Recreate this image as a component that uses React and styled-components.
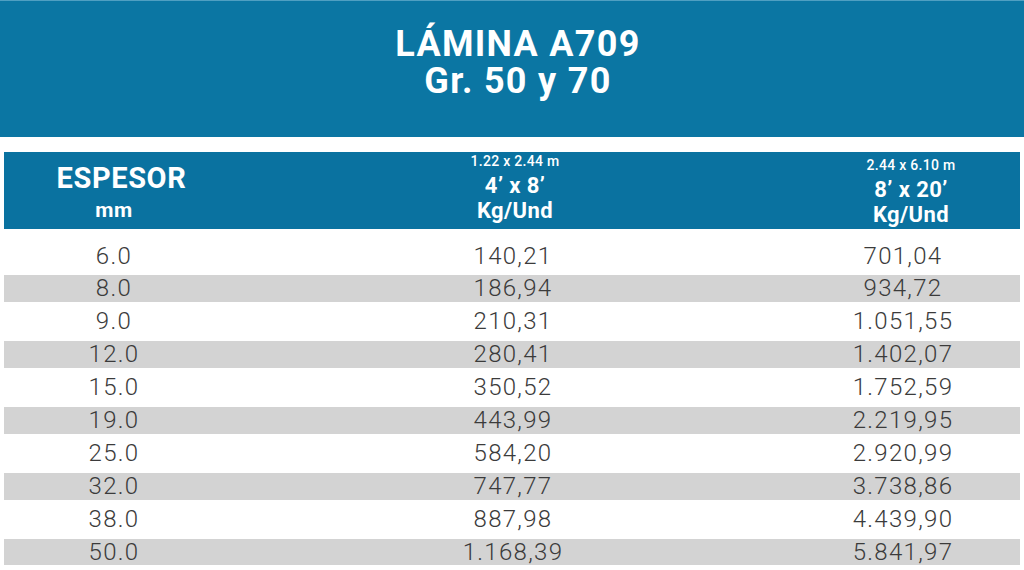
import React from "react";
import styled, { createGlobalStyle } from "styled-components";

const Global = createGlobalStyle`
  html, body { margin: 0; padding: 0; background: #ffffff; }
  body { font-family: Roboto, "Noto Sans", sans-serif; width: 1024px; height: 570px; overflow: hidden; }
`;

const Page = styled.div`
  width: 1024px;
  height: 570px;
  display: flex;
  flex-direction: column;
  background: #fff;
`;

const Banner = styled.header`
  height: 137px;
  box-sizing: border-box;
  background: #0b76a3;
  border-top: 1px solid #4f9fc2;
  padding: 25px 0 0 12px;
  display: flex;
  flex-direction: column;
  align-items: center;
`;

const TitleLine = styled.div`
  color: #fff;
  font-family: Roboto, sans-serif;
  font-weight: 700;
  font-size: 36px;
  line-height: 37px;
  letter-spacing: 1.3px;
  white-space: nowrap;
`;

const Table = styled.section`
  margin: 15px 4px 0 4px;
  display: flex;
  flex-direction: column;
`;

const HeadRow = styled.div`
  height: 77px;
  background: #0a72a0;
  display: grid;
  grid-template-columns: 220px 1fr 218px;
  align-items: start;
  color: #fff;
  font-family: Roboto, sans-serif;
  font-weight: 700;
`;

const HeadCell = styled.div`
  display: flex;
  flex-direction: column;
  align-items: center;
  padding-top: ${(p) => p.$top}px;
  padding-left: ${(p) => p.$left || 0}px;
`;

const BigHead = styled.div`
  font-size: 29px;
  line-height: 30px;
  letter-spacing: 0.6px;
  padding-left: 15px;
`;

const Unit = styled.div`
  font-size: 21px;
  line-height: 22px;
  margin-top: 6px;
  letter-spacing: 0.6px;
`;

const Dim = styled.div`
  font-size: 14px;
  line-height: 16px;
  font-weight: 500;
  letter-spacing: 0.3px;
`;

const Size = styled.div`
  font-size: 22px;
  line-height: 24px;
  margin-top: ${(p) => p.$mt}px;
  letter-spacing: 0.4px;
  white-space: nowrap;
`;

const Body = styled.div`
  padding-top: 10.5px;
  display: flex;
  flex-direction: column;
`;

const Row = styled.div`
  height: 32.9px;
  box-sizing: border-box;
  padding: 3px 0;
  background: ${(p) => (p.$shade ? "#d3d3d3" : "transparent")};
  background-clip: content-box;
  display: grid;
  grid-template-columns: 220px 1fr 218px;
  align-items: center;
  color: #3b3b3b;
  font-family: Roboto, sans-serif;
  font-weight: 300;
  font-size: 24px;
  letter-spacing: 1.3px;
`;

const Cell = styled.div`
  text-align: center;
  line-height: 27px;
  padding-right: ${(p) => p.$pr || 0}px;
`;

const rows = [
  ["6.0", "140,21", "701,04"],
  ["8.0", "186,94", "934,72"],
  ["9.0", "210,31", "1.051,55"],
  ["12.0", "280,41", "1.402,07"],
  ["15.0", "350,52", "1.752,59"],
  ["19.0", "443,99", "2.219,95"],
  ["25.0", "584,20", "2.920,99"],
  ["32.0", "747,77", "3.738,86"],
  ["38.0", "887,98", "4.439,90"],
  ["50.0", "1.168,39", "5.841,97"],
];

export default function App() {
  return (
    <Page>
      <Global />
      <Banner>
        <TitleLine>LÁMINA A709</TitleLine>
        <TitleLine>Gr. 50 y 70</TitleLine>
      </Banner>
      <Table>
        <HeadRow>
          <HeadCell $top={11}>
            <BigHead>ESPESOR</BigHead>
            <Unit>mm</Unit>
          </HeadCell>
          <HeadCell $top={1} $left={4}>
            <Dim>1.22 x 2.44 m</Dim>
            <Size $mt={5}>4’ x 8’</Size>
            <Size $mt={1}>Kg/Und</Size>
          </HeadCell>
          <HeadCell $top={5}>
            <Dim>2.44 x 6.10 m</Dim>
            <Size $mt={5}>8’ x 20’</Size>
            <Size $mt={1}>Kg/Und</Size>
          </HeadCell>
        </HeadRow>
        <Body>
          {rows.map((r, i) => (
            <Row key={r[0]} $shade={i % 2 === 1}>
              <Cell>{r[0]}</Cell>
              <Cell>{r[1]}</Cell>
              <Cell $pr={16}>{r[2]}</Cell>
            </Row>
          ))}
        </Body>
      </Table>
    </Page>
  );
}
